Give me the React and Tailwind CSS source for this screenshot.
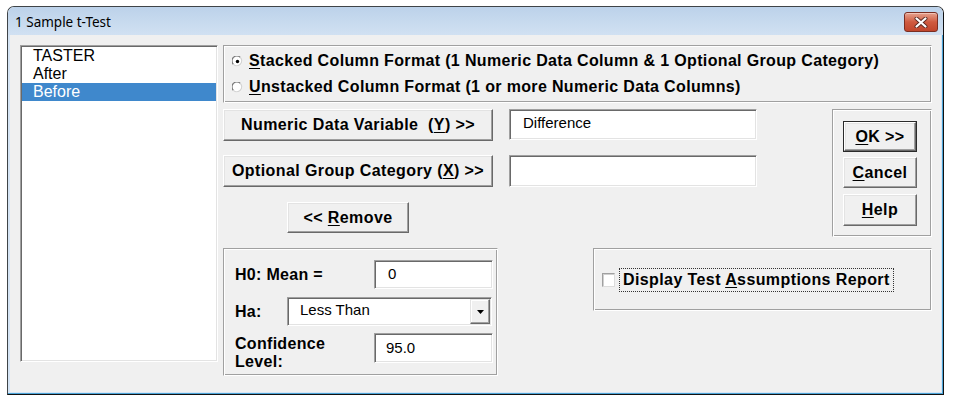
import React from "react";

function U({ children }) {
  return <span className="underline decoration-1 underline-offset-[2px]">{children}</span>;
}

function Btn({ children, className = "" }) {
  return (
    <div
      className={
        "flex items-center justify-center bg-[#f0f0f0] border border-t-white border-l-white border-r-[#696969] border-b-[#696969] shadow-[inset_-1px_-1px_0_#a0a0a0,inset_1px_1px_0_#e3e3e3] text-[16px] font-bold tracking-[0.4px] whitespace-pre text-black " +
        className
      }
    >
      {children}
    </div>
  );
}

function Field({ children, className = "" }) {
  return (
    <div
      className={
        "flex items-center bg-white border border-t-[#a0a0a0] border-l-[#a0a0a0] border-r-white border-b-white shadow-[inset_1px_1px_0_#696969,inset_-1px_-1px_0_#e3e3e3] text-[15px] text-black " +
        className
      }
    >
      {children}
    </div>
  );
}

const groupCls =
  "border border-t-[#a0a0a0] border-l-[#a0a0a0] border-r-white border-b-white shadow-[inset_1px_1px_0_white,inset_-1px_-1px_0_#a0a0a0]";

function Radio({ checked }) {
  return (
    <svg width="11" height="11" viewBox="0 0 11 11" className="shrink-0">
      <circle cx="5.5" cy="5.5" r="4.8" fill="#ffffff" />
      <path d="M1.4 8.3 A4.8 4.8 0 0 1 8.3 1.4" fill="none" stroke="#7a7a7a" strokeWidth="1.2" />
      <path d="M8.3 1.4 A4.8 4.8 0 0 1 1.4 8.3" fill="none" stroke="#d4d4d4" strokeWidth="1.2" />
      {checked && <circle cx="5.5" cy="5.5" r="1.7" fill="#000" />}
    </svg>
  );
}

export default function App() {
  return (
    <div className="w-[957px] h-[400px] bg-white pl-[7px] pt-[6px] overflow-hidden font-['Liberation_Sans',Arial,sans-serif]">
      <div className="w-[937px] h-[389px] flex flex-col border border-[#3f4448] border-r-[#111] border-b-[#111] rounded-t-[7px] overflow-hidden">
        {/* Title bar */}
        <div className="relative h-[28px] shrink-0 flex items-center pl-[7px] bg-linear-to-b from-[#bcd2ea] to-[#d1e1f2]">
          <span className="text-[13.5px] text-black font-['Noto_Sans','Open_Sans',sans-serif] pt-[2px]">1 Sample t-Test</span>
          <div className="absolute right-[5px] top-[5px] w-[34px] h-[20px] rounded-[3px] border border-[#7a2e22] bg-linear-to-b from-[#e5a18e] via-[#cf5a3f] to-[#c0452c] flex items-center justify-center shadow-[inset_0_1px_0_#f2c2b4]">
            <svg width="14" height="11" viewBox="0 0 14 11">
              <path d="M2.5 1.5 L11.5 9.5 M11.5 1.5 L2.5 9.5" stroke="#5b2a22" strokeWidth="4" strokeLinecap="round" />
              <path d="M2.5 1.5 L11.5 9.5 M11.5 1.5 L2.5 9.5" stroke="#ffffff" strokeWidth="2.2" strokeLinecap="round" />
            </svg>
          </div>
        </div>
        {/* Body frame */}
        <div className="flex-1 flex bg-[#d6e5f5] pl-[2px] pr-px pb-px border-r border-b border-[#4aa3d6]">
          <div className="flex-1 bg-[#f0f0f0] flex items-start pt-[10px] pl-[10px]">
            {/* Listbox */}
            <div className="w-[198px] h-[317px] shrink-0 bg-white border border-t-[#a0a0a0] border-l-[#a0a0a0] border-r-white border-b-white shadow-[inset_1px_1px_0_#696969,inset_-1px_-1px_0_#e3e3e3] pt-px pl-px pr-px">
              <div className="h-[18px] leading-[18px] text-[16px] pl-[11px] text-black">TASTER</div>
              <div className="h-[18px] leading-[18px] text-[16px] pl-[11px] text-black">After</div>
              <div className="h-[18px] leading-[18px] text-[16px] pl-[11px] text-white bg-[#3f88cc]">Before</div>
            </div>

            {/* Right column */}
            <div className="ml-[5px] w-[709px] flex flex-col">
              {/* Radio group */}
              <div className={"h-[58px] flex flex-col pt-[2px] pl-[8px] " + groupCls}>
                <div className="h-[26px] flex items-center gap-[6px] text-[16px] font-bold tracking-[0.35px] text-black">
                  <Radio checked />
                  <span><U>S</U>tacked Column Format (1 Numeric Data Column &amp; 1 Optional Group Category)</span>
                </div>
                <div className="h-[26px] flex items-center gap-[6px] text-[16px] font-bold tracking-[0.35px] text-black">
                  <Radio />
                  <span><U>U</U>nstacked Column Format (1 or more Numeric Data Columns)</span>
                </div>
              </div>

              {/* Middle */}
              <div className="mt-[6px] flex items-start">
                <div className="w-[534px] flex flex-col">
                  <div className="flex items-start">
                    <Btn className="w-[270px] h-[32px]">
                      {"Numeric Data Variable  ("}<U>Y</U>{") >>"}
                    </Btn>
                    <Field className="ml-[16px] w-[248px] h-[31px] pl-[13px] pb-[2px]">Difference</Field>
                  </div>
                  <div className="mt-[14px] flex items-start">
                    <Btn className="w-[270px] h-[32px]">
                      {"Optional Group Category ("}<U>X</U>{") >>"}
                    </Btn>
                    <Field className="ml-[16px] w-[248px] h-[32px]"></Field>
                  </div>
                  <Btn className="mt-[15px] ml-[64px] w-[122px] h-[31px]">
                    {"<< "}<U>R</U>{"emove"}
                  </Btn>
                </div>
                <div className={"ml-[75px] w-[100px] h-[128px] flex flex-col pt-[11px] pl-[10px] " + groupCls}>
                  <div className="w-[74px] h-[31px] border border-[#2a2a2a] flex">
                    <Btn className="flex-1">
                      <U>O</U>{"K >>"}
                    </Btn>
                  </div>
                  <Btn className="mt-[5px] w-[74px] h-[31px]">
                    <U>C</U>ancel
                  </Btn>
                  <Btn className="mt-[6px] w-[74px] h-[32px]">
                    <U>H</U>elp
                  </Btn>
                </div>
              </div>

              {/* Bottom */}
              <div className="mt-[11px] flex items-start">
                <div className={"w-[275px] h-[128px] flex flex-col pt-[11px] pl-[11px] " + groupCls}>
                  <div className="flex items-center h-[29px]">
                    <div className="w-[139px] text-[16px] font-bold tracking-[0.3px] text-black">H0: Mean =</div>
                    <Field className="w-[119px] h-[29px] pl-[13px]">0</Field>
                  </div>
                  <div className="mt-[8px] flex items-center h-[29px]">
                    <div className="w-[52px] text-[16px] font-bold tracking-[0.3px] text-black">Ha:</div>
                    <Field className="w-[205px] h-[29px] pl-[12px] pr-[1px] justify-between">
                      <span className="pb-[2px]">Less Than</span>
                      <div className="w-[20px] h-[25px] flex items-center justify-center bg-[#f0f0f0] border border-t-[#e3e3e3] border-l-[#e3e3e3] border-r-[#696969] border-b-[#696969] shadow-[inset_-1px_-1px_0_#a0a0a0,inset_1px_1px_0_#ffffff]">
                        <svg width="7" height="4" viewBox="0 0 7 4">
                          <path d="M0 0 H7 L3.5 4 Z" fill="#000" />
                        </svg>
                      </div>
                    </Field>
                  </div>
                  <div className="mt-[7px] flex items-start h-[30px]">
                    <div className="w-[139px] mt-[2px] text-[16px] leading-[18px] font-bold tracking-[0.3px] text-black">
                      Confidence
                      <br />
                      Level:
                    </div>
                    <Field className="w-[119px] h-[30px] pl-[11px]">95.0</Field>
                  </div>
                </div>
                <div className={"ml-[95px] w-[339px] h-[63px] flex items-center pl-[8px] " + groupCls}>
                  <div className="w-[13px] h-[14px] bg-white border border-t-[#a0a0a0] border-l-[#a0a0a0] border-r-[#dcdcdc] border-b-[#dcdcdc] shadow-[inset_1px_1px_0_#d0d0d0]"></div>
                  <div className="ml-[4px] h-[24px] flex items-center px-[3px] border border-dotted border-[#333] text-[16px] font-bold tracking-[0.4px] text-black">
                    <span>Display Test <U>A</U>ssumptions Report</span>
                  </div>
                </div>
              </div>
            </div>
          </div>
        </div>
      </div>
    </div>
  );
}
